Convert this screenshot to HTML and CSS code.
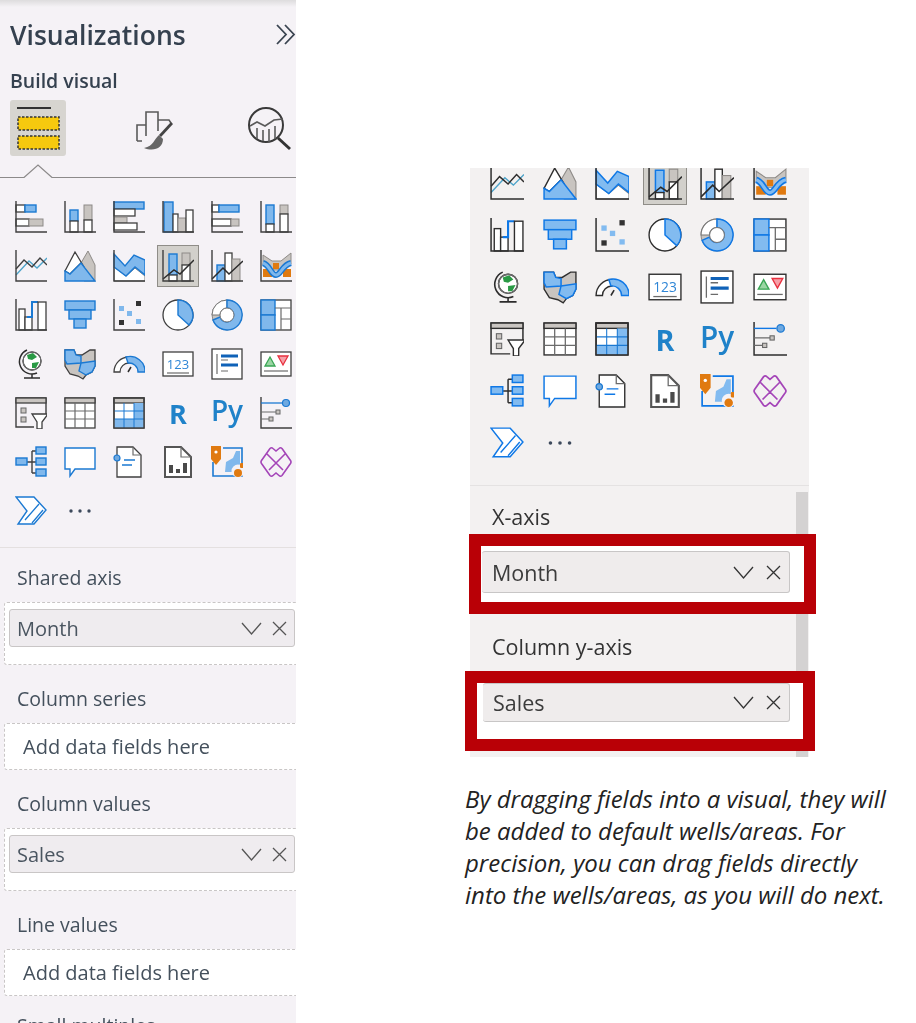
FILE: index.html
```html
<!DOCTYPE html>
<html lang="en">
<head>
<meta charset="UTF-8">
<meta name="viewport" content="width=device-width, initial-scale=1.0">
<title>Visualizations pane</title>
<link rel="stylesheet" href="styles.css">
</head>
<body>

<!-- Shared icon sheet, both panes use it -->
<svg class="sheet" aria-hidden="true">
  <symbol id="i-sbar" viewBox="0 0 32 32"><rect class="w" x="1" y="4" width="9" height="7"/><rect class="b" x="10" y="4" width="11" height="7"/><rect class="w" x="1" y="18" width="13" height="7"/><rect class="g" x="14" y="18" width="14" height="7"/><path class="l" d="M1 0V31H32"/></symbol>
  <symbol id="i-scol" viewBox="0 0 32 32"><rect class="b" x="6" y="9" width="8" height="11"/><rect class="w" x="6" y="20" width="8" height="11"/><rect class="g" x="20" y="4" width="8" height="15"/><rect class="w" x="20" y="19" width="8" height="12"/><path class="l" d="M1 0V31H32"/></symbol>
  <symbol id="i-cbar" viewBox="0 0 32 32"><rect class="b" x="1" y="1" width="30" height="7"/><rect class="w" x="1" y="8" width="21" height="7"/><rect class="g" x="1" y="16" width="13" height="6"/><rect class="w" x="1" y="22" width="23" height="7"/><path class="l" d="M1 0V31H32"/></symbol>
  <symbol id="i-ccol" viewBox="0 0 32 32"><rect class="b" x="2" y="1" width="9" height="30"/><rect class="w" x="11" y="13" width="5" height="18"/><rect class="g" x="16" y="17" width="8" height="14"/><rect class="w" x="24" y="9" width="7" height="22"/><path class="l" d="M1 0V31H32"/></symbol>
  <symbol id="i-pbar" viewBox="0 0 32 32"><rect class="w" x="1" y="4" width="7" height="7"/><rect class="b" x="8" y="4" width="20" height="7"/><rect class="w" x="1" y="18" width="19" height="7"/><rect class="g" x="20" y="18" width="8" height="7"/><path class="l" d="M1 0V31H32"/></symbol>
  <symbol id="i-pcol" viewBox="0 0 32 32"><rect class="b" x="6" y="4" width="8" height="19"/><rect class="w" x="6" y="23" width="8" height="8"/><rect class="g" x="20" y="4" width="8" height="9"/><rect class="w" x="20" y="13" width="8" height="18"/><path class="l" d="M1 0V31H32"/></symbol>

  <symbol id="i-line" viewBox="0 0 32 32"><path class="t" d="M1 25L14 11L22 18L32 8"/><path class="l" d="M1 19L9 10L17 17L25 8L32 15"/><path class="l" d="M1 0V31H32"/></symbol>
  <symbol id="i-area" viewBox="0 0 32 32"><path class="g" d="M17 13L24 1L31 15V31H20Z"/><path class="w" d="M1 21L11 2L20 17L17 13L6 24Z"/><path class="b" d="M1 31V21L6 24L17 13L31 31Z"/></symbol>
  <symbol id="i-sarea" viewBox="0 0 32 32"><path class="wn" d="M1 17L13 26L22 18L32 26V31H1Z"/><path class="b" d="M1 4L12 16L21 5L32 10V25L22 17L13 26L1 17Z"/><path class="l" d="M1 0V31H32"/></symbol>
  <symbol id="i-combo" viewBox="0 0 32 32"><rect class="b" x="7" y="4" width="8" height="21"/><rect class="w" x="7" y="25" width="8" height="6"/><rect class="g" x="20" y="3" width="8" height="12"/><rect class="w" x="20" y="15" width="8" height="16"/><path class="l2" d="M1 29L12 20L18 24L32 10"/><path class="l" d="M1 0V31H32"/></symbol>
  <symbol id="i-combo2" viewBox="0 0 32 32"><rect class="b" x="6" y="15" width="8" height="16"/><rect class="w" x="14" y="3" width="7" height="28"/><rect class="g" x="21" y="9" width="8" height="22"/><path class="l2" d="M1 29L12 18L18 24L32 11"/><path class="l" d="M1 0V31H32"/></symbol>
  <symbol id="i-ribbon" viewBox="0 0 32 32"><path class="g" d="M3 5L12 11H21L31 3V14L21 20H12L3 15Z"/><rect class="or" x="3" y="19" width="9" height="8"/><rect class="or" x="23" y="19" width="8" height="8"/><rect class="or" x="13" y="13" width="6" height="6"/><path class="rib-o" d="M3 13C10 15 11 25 16 25C21 25 22 15 31 13"/><path class="rib-i" d="M3 13C10 15 11 25 16 25C21 25 22 15 31 13"/><path class="l" d="M1 0V31H32"/></symbol>

  <symbol id="i-fall" viewBox="0 0 32 32"><rect class="w" x="4" y="10" width="6" height="21"/><rect class="w" x="10" y="18" width="7" height="13"/><path class="bs2" d="M12 18H17V3H23"/><rect class="w" x="17" y="10" width="0" height="21"/><rect class="w" x="23" y="3" width="8" height="28"/><path class="l" d="M1 0V31H32"/></symbol>
  <symbol id="i-funnel" viewBox="0 0 32 32"><rect class="b" x="1" y="2" width="30" height="9"/><rect class="b" x="5" y="11" width="22" height="9"/><rect class="b" x="10" y="20" width="12" height="9"/></symbol>
  <symbol id="i-scatter" viewBox="0 0 32 32"><path class="l" d="M1 0V31H32"/><rect class="dk" x="23" y="2" width="5" height="5"/><rect class="lb" x="6" y="7" width="5" height="5"/><rect class="lb" x="14" y="12" width="5" height="5"/><rect class="dk" x="6" y="21" width="5" height="5"/><rect class="lb" x="23" y="20" width="5" height="5"/></symbol>
  <symbol id="i-pie" viewBox="0 0 32 32"><circle class="w" cx="16" cy="16" r="15"/><path class="b" d="M16 1A15 15 0 0 1 27 26L16 16Z"/></symbol>
  <symbol id="i-donut" viewBox="0 0 32 32"><circle class="g" cx="16" cy="16" r="15"/><path class="wn" d="M1 16A15 15 0 0 1 16 1V9A7 7 0 0 0 9 16Z"/><path class="b" d="M16 1A15 15 0 1 1 2 21L9 18A7 7 0 1 0 16 9Z"/><circle class="wn" cx="16" cy="16" r="7"/></symbol>
  <symbol id="i-tree" viewBox="0 0 32 32"><rect class="w" x="1" y="1" width="30" height="30"/><rect class="b" x="1" y="1" width="14" height="15"/><rect class="b" x="1" y="16" width="14" height="15"/><path class="n" d="M15 9H31M21 9V31M21 20H31"/></symbol>

  <symbol id="i-globe" viewBox="0 0 32 32"><circle class="w" cx="17" cy="13" r="9"/><path class="gn" d="M12 7L18 5L22 9L17 12L13 11ZM17 15L24 14L21 20L17 20Z"/><path class="l2" d="M12 2A12 12 0 0 0 22 25M17 26V30M9 30H25"/><circle class="n" cx="17" cy="13" r="9"/></symbol>
  <symbol id="i-map" viewBox="0 0 32 32"><path class="gd" d="M1 2L10 2L12 7L18 7L26 2H31V18L28 24L22 27L19 31L14 28L6 26L1 18Z"/><path class="b" d="M1 2H10L12 7L17 8V15L3 16L1 12Z"/><path class="b" d="M17 15L31 13V18L28 24L22 27L15 23Z"/></symbol>
  <symbol id="i-gauge" viewBox="0 0 32 32"><path class="w" d="M1 24A15 15 0 0 1 16 9V15A9 9 0 0 0 7 24Z"/><path class="b" d="M13 9A15 15 0 0 1 32 24H25A9 9 0 0 0 15 15Z"/><path class="l2" d="M15 24L18 19"/></symbol>
  <symbol id="i-card" viewBox="0 0 32 32"><rect class="w" x="1" y="4" width="30" height="24"/><text class="num" x="16" y="21" text-anchor="middle">123</text><path class="n" d="M5 25H27"/></symbol>
  <symbol id="i-multi" viewBox="0 0 32 32"><rect class="w" x="1" y="1" width="30" height="30"/><path class="n" d="M6 6V26M10 12H17M10 23H17"/><path class="bt" d="M10 8H27M10 17H27"/></symbol>
  <symbol id="i-kpi" viewBox="0 0 32 32"><rect class="w" x="1" y="4" width="30" height="24"/><path class="gt" d="M5 18L10 9L15 18Z"/><path class="rt" d="M18 8H28L23 17Z"/><path class="n" d="M4 23H28"/></symbol>

  <symbol id="i-slicer" viewBox="0 0 32 32"><path class="l" d="M19 30H1V1H31V17"/><rect class="gl" x="1" y="1" width="30" height="5"/><rect class="sq" x="6" y="11" width="5" height="5"/><rect class="sq" x="6" y="20" width="5" height="5"/><path class="w" d="M17 17H33L27 25V32H22V25Z"/></symbol>
  <symbol id="i-table" viewBox="0 0 32 32"><rect class="w" x="1" y="1" width="30" height="30"/><rect class="gl" x="1" y="1" width="30" height="5"/><path class="n" d="M11 6V31M21 6V31M1 14H31M1 22H31"/></symbol>
  <symbol id="i-matrix" viewBox="0 0 32 32"><rect class="w" x="1" y="1" width="30" height="30"/><rect class="gl" x="1" y="1" width="30" height="5"/><rect class="lb" x="21" y="6" width="10" height="25"/><rect class="lb" x="1" y="22" width="30" height="9"/><path class="cell" d="M11 6V31M21 6V31M1 14H31M1 22H31"/><rect class="l" x="1" y="1" width="30" height="30"/></symbol>
  <symbol id="i-r" viewBox="0 0 32 32"><text class="rtext" x="16" y="27" text-anchor="middle">R</text></symbol>
  <symbol id="i-py" viewBox="0 0 32 32"><text class="rtext py" x="16" y="24" text-anchor="middle">Py</text></symbol>
  <symbol id="i-infl" viewBox="0 0 32 32"><path class="l" d="M1 0V31H32"/><path class="bs" d="M1 6H22"/><circle class="bk" cx="26" cy="6" r="3.500"/><path class="n" d="M1 15H16M1 22H9"/><rect class="sq" x="16" y="13" width="4" height="4"/><rect class="sq" x="9" y="20" width="4" height="4"/></symbol>

  <symbol id="i-decomp" viewBox="0 0 32 32"><path class="l" d="M12 16H21M17 5V27M17 5H21M17 27H21"/><rect class="b" x="1" y="12" width="11" height="7"/><rect class="b" x="21" y="1" width="10" height="7"/><rect class="b" x="21" y="12" width="10" height="7"/><rect class="b" x="21" y="23" width="10" height="7"/></symbol>
  <symbol id="i-bubble" viewBox="0 0 32 32"><path class="wb" d="M1 2H31V23H11L6 30V23H1Z"/></symbol>
  <symbol id="i-para" viewBox="0 0 32 32"><path class="w" d="M4 1H20L28 9V31H4Z"/><path class="n" d="M20 1V9H28"/><circle class="bk" cx="4" cy="12" r="3"/><path class="bs" d="M11 14H22M9 19H19"/></symbol>
  <symbol id="i-report" viewBox="0 0 32 32"><path class="wt" d="M3 1H19L29 11V31H3Z"/><path class="n" d="M19 1V11H29"/><path class="bars" d="M7 19h4v8H7zM14 23h4v4h-4zM21 17h4v10h-4z"/></symbol>
  <symbol id="i-apps" viewBox="0 0 32 32"><path class="bt2" d="M12 2H31V30H2V16"/><path class="lb" d="M14 26L15 16L22 12L25 5L29 5V18L25 26Z"/><circle class="halo" cx="27" cy="25" r="6.500"/><path class="oran" d="M0 0H10V13L5 19L0 13Z"/><circle class="spot" cx="5" cy="6" r="1.600"/><rect class="oran" x="29" y="17" width="5" height="5" rx="1"/><circle class="oran" cx="27" cy="27" r="4"/></symbol>
  <symbol id="i-diamond" viewBox="0 0 32 32"><path class="pur" d="M10 2.500Q11.500 1 13 2.500L16 5L19 2.500Q20.500 1 22 2.500L30.500 14.500Q31.500 16 30.500 17.500L22 29.500Q20.500 31 19 29.500L16 27L13 29.500Q11.500 31 10 29.500L1.500 17.500Q.5 16 1.500 14.500ZM7 8L23 24M25 8L9 24"/></symbol>
  <symbol id="i-flow" viewBox="0 0 32 32"><path class="wb" d="M1 2H19L31 15L19 29H3L12 16Z"/><path class="bs" d="M10 25L24 9M17 28L28 15"/></symbol>
  <symbol id="i-more" viewBox="0 0 32 32"><circle class="dot" cx="7" cy="16" r="1.700"/><circle class="dot" cx="16" cy="16" r="1.700"/><circle class="dot" cx="25" cy="16" r="1.700"/></symbol>

  <symbol id="i-chev" viewBox="0 0 21 13"><path d="M1 1L10.500 12L20 1"/></symbol>
  <symbol id="i-x" viewBox="0 0 15 15"><path d="M1 1L14 14M14 1L1 14"/></symbol>
</svg>

<main class="page">

  <!-- Left: the whole pane -->
  <aside class="pane">
    <div class="pane-head">
      <h1>Visualizations</h1>
      <svg class="collapse" viewBox="0 0 21 21"><path d="M2 1L11 10.500L2 20M10 1L19 10.500L10 20"/></svg>
    </div>
    <h2>Build visual</h2>
    <div class="tabs">
      <div class="tab tab-active">
        <svg viewBox="0 0 56 56"><path class="f-rule" d="M7 8H41"/><rect class="f-well" x="8" y="17" width="41" height="13"/><rect class="f-well" x="8" y="36" width="41" height="13"/></svg>
      </div>
      <div class="tab tab-format">
        <svg viewBox="0 0 42 42"><path class="f-line" d="M3 32V16H12V3H24V11H35L37 14M3 32H8M12 16V27M24 11V22"/><path class="f-brush" d="M38 14L26 27"/><path class="f-blob" d="M25 26C20 30 20 37 10 39C20 43 29 39 29 30Z"/></svg>
      </div>
      <div class="tab tab-analytics">
        <svg viewBox="0 0 44 44"><circle class="f-ring" cx="18" cy="18" r="17"/><path class="f-line" d="M2 19L9 15L17 19L26 13L35 12M9 21V32M15 23V34M21 22V35M27 19V32"/><path class="f-glass" d="M30 31L42 42"/></svg>
      </div>
    </div>
    <svg class="notch" viewBox="0 0 296 14" preserveAspectRatio="none"><path d="M0 13.500H24L38 1L52 13.500H296"/></svg>

    <div class="icons">
      <svg class="ico"><use href="#i-sbar"/></svg>
      <svg class="ico"><use href="#i-scol"/></svg>
      <svg class="ico"><use href="#i-cbar"/></svg>
      <svg class="ico"><use href="#i-ccol"/></svg>
      <svg class="ico"><use href="#i-pbar"/></svg>
      <svg class="ico"><use href="#i-pcol"/></svg>
      <svg class="ico"><use href="#i-line"/></svg>
      <svg class="ico"><use href="#i-area"/></svg>
      <svg class="ico"><use href="#i-sarea"/></svg>
      <span class="ico-on"><svg class="ico"><use href="#i-combo"/></svg></span>
      <svg class="ico"><use href="#i-combo2"/></svg>
      <svg class="ico"><use href="#i-ribbon"/></svg>
      <svg class="ico"><use href="#i-fall"/></svg>
      <svg class="ico"><use href="#i-funnel"/></svg>
      <svg class="ico"><use href="#i-scatter"/></svg>
      <svg class="ico"><use href="#i-pie"/></svg>
      <svg class="ico"><use href="#i-donut"/></svg>
      <svg class="ico"><use href="#i-tree"/></svg>
      <svg class="ico"><use href="#i-globe"/></svg>
      <svg class="ico"><use href="#i-map"/></svg>
      <svg class="ico"><use href="#i-gauge"/></svg>
      <svg class="ico"><use href="#i-card"/></svg>
      <svg class="ico"><use href="#i-multi"/></svg>
      <svg class="ico"><use href="#i-kpi"/></svg>
      <svg class="ico"><use href="#i-slicer"/></svg>
      <svg class="ico"><use href="#i-table"/></svg>
      <svg class="ico"><use href="#i-matrix"/></svg>
      <svg class="ico"><use href="#i-r"/></svg>
      <svg class="ico"><use href="#i-py"/></svg>
      <svg class="ico"><use href="#i-infl"/></svg>
      <svg class="ico"><use href="#i-decomp"/></svg>
      <svg class="ico"><use href="#i-bubble"/></svg>
      <svg class="ico"><use href="#i-para"/></svg>
      <svg class="ico"><use href="#i-report"/></svg>
      <svg class="ico"><use href="#i-apps"/></svg>
      <svg class="ico"><use href="#i-diamond"/></svg>
      <svg class="ico"><use href="#i-flow"/></svg>
      <svg class="ico"><use href="#i-more"/></svg>
    </div>

    <div class="fields">
      <label>Shared axis</label>
      <div class="well">
        <div class="pill"><span>Month</span><svg class="chev"><use href="#i-chev"/></svg><svg class="cross"><use href="#i-x"/></svg></div>
      </div>
      <label>Column series</label>
      <div class="well well-empty">Add data fields here</div>
      <label>Column values</label>
      <div class="well">
        <div class="pill"><span>Sales</span><svg class="chev"><use href="#i-chev"/></svg><svg class="cross"><use href="#i-x"/></svg></div>
      </div>
      <label>Line values</label>
      <div class="well well-empty well-last">Add data fields here</div>
      <label>Small multiples</label>
    </div>
  </aside>

  <!-- Right: cropped pane with the callouts, and the note -->
  <section class="side">
    <div class="crop">
      <div class="crop-icons">
        <div class="icons icons-big">
          <svg class="ico"><use href="#i-line"/></svg>
          <svg class="ico"><use href="#i-area"/></svg>
          <svg class="ico"><use href="#i-sarea"/></svg>
          <span class="ico-on"><svg class="ico"><use href="#i-combo"/></svg></span>
          <svg class="ico"><use href="#i-combo2"/></svg>
          <svg class="ico"><use href="#i-ribbon"/></svg>
          <svg class="ico"><use href="#i-fall"/></svg>
          <svg class="ico"><use href="#i-funnel"/></svg>
          <svg class="ico"><use href="#i-scatter"/></svg>
          <svg class="ico"><use href="#i-pie"/></svg>
          <svg class="ico"><use href="#i-donut"/></svg>
          <svg class="ico"><use href="#i-tree"/></svg>
          <svg class="ico"><use href="#i-globe"/></svg>
          <svg class="ico"><use href="#i-map"/></svg>
          <svg class="ico"><use href="#i-gauge"/></svg>
          <svg class="ico"><use href="#i-card"/></svg>
          <svg class="ico"><use href="#i-multi"/></svg>
          <svg class="ico"><use href="#i-kpi"/></svg>
          <svg class="ico"><use href="#i-slicer"/></svg>
          <svg class="ico"><use href="#i-table"/></svg>
          <svg class="ico"><use href="#i-matrix"/></svg>
          <svg class="ico"><use href="#i-r"/></svg>
          <svg class="ico"><use href="#i-py"/></svg>
          <svg class="ico"><use href="#i-infl"/></svg>
          <svg class="ico"><use href="#i-decomp"/></svg>
          <svg class="ico"><use href="#i-bubble"/></svg>
          <svg class="ico"><use href="#i-para"/></svg>
          <svg class="ico"><use href="#i-report"/></svg>
          <svg class="ico"><use href="#i-apps"/></svg>
          <svg class="ico"><use href="#i-diamond"/></svg>
          <svg class="ico"><use href="#i-flow"/></svg>
          <svg class="ico"><use href="#i-more"/></svg>
        </div>
      </div>
      <div class="crop-fields">
        <div class="thumb"></div>
        <label>X-axis</label>
        <div class="callout callout-x">
          <div class="pill"><span>Month</span><svg class="chev"><use href="#i-chev"/></svg><svg class="cross"><use href="#i-x"/></svg></div>
        </div>
        <label>Column y-axis</label>
        <div class="callout callout-y">
          <div class="pill"><span>Sales</span><svg class="chev"><use href="#i-chev"/></svg><svg class="cross"><use href="#i-x"/></svg></div>
        </div>
      </div>
    </div>
    <p class="note">By dragging fields into a visual, they will be added to default wells/areas. For precision, you can drag fields directly into the wells/areas, as you will do next.</p>
  </section>

</main>
</body>
</html>
```

FILE: styles.css
```css
* { box-sizing: border-box; }
html, body { margin: 0; height: 100%; background: #fff; overflow: hidden; }
body { font-family: "Open Sans", "Noto Sans", sans-serif; color: #404040; }

.sheet { display: none; }

.page { display: flex; height: 1023px; overflow: hidden; }

/* Left pane */
.pane {
  width: 296px;
  height: 1023px;
  flex: none;
  overflow: hidden;
  background: linear-gradient(#dddcdd 0, #f5f2f6 7px);
  --ink: #3f3f3f;
  --blue: #1b79d2;
  --light: #80b8ec;
  filter: blur(0.4px);
}
.pane-head { display: flex; justify-content: space-between; align-items: center; padding: 17px 0 0 10px; height: 52px; }
h1 { margin: 0; font-size: 26.500px; font-weight: 600; line-height: 34px; color: #35414f; }
.collapse { width: 21px; height: 21px; fill: none; stroke: #3a4450; stroke-width: 1.800; }
h2 { margin: 16px 0 0 10px; font-size: 19.500px; font-weight: 600; line-height: 26px; color: #35414f; }

.tabs { display: flex; height: 56px; margin: 6px 0 0 10px; }
.tab { width: 56px; height: 56px; flex: none; }
.tab svg { display: block; }
.tab-active { background: #d7d5d0; border-radius: 3px; }
.tab-format { margin-left: 68px; padding: 9px 0 0 0; }
.tab-format svg { width: 42px; height: 42px; }
.tab-analytics { margin-left: 56px; padding: 7px 0 0 2px; }
.tab-analytics svg { width: 44px; height: 44px; }
.f-rule { stroke: #333; stroke-width: 2; fill: none; }
.f-well { fill: #f6c90e; stroke: #333; stroke-width: 1.500; stroke-dasharray: 2.500 1.500; }
.f-line { fill: none; stroke: #5a5a5a; stroke-width: 1.600; }
.f-ring { fill: none; stroke: #3a3a3a; stroke-width: 2; }
.f-brush { fill: none; stroke: #444; stroke-width: 2.800; }
.f-blob { fill: #666; }
.f-glass { fill: none; stroke: #333; stroke-width: 3; }

.notch { display: block; width: 296px; height: 14px; margin-top: 8px; fill: none; stroke: #8c8a8a; stroke-width: 1.200; }

/* Icon grid */
.icons { display: grid; grid-template-columns: repeat(6, 32px); grid-auto-rows: 32px; gap: 17px; padding: 23px 0 0 15px; }
.ico { display: block; width: 32px; height: 32px; overflow: visible; }
.ico-on { display: block; background: #d2d0cb; outline: 1px solid #8f8d88; box-shadow: 0 0 0 4px #d2d0cb; outline-offset: 4px; }

.icons-big { grid-template-columns: repeat(6, 34px); grid-auto-rows: 34px; column-gap: 18.500px; row-gap: 18px; padding: 0 0 0 20px; margin-top: -2px; }
.icons-big .ico { width: 34px; height: 34px; }

/* Icon parts, colours come from the pane */
.l, .n, .l2, .t, .bs, .bs2, .bt, .bt2, .cell, .rib-o, .rib-i { fill: none; }
.l { stroke: var(--ink); stroke-width: 1.400; }
.l2 { stroke: #2c2c2c; stroke-width: 1.500; }
.n { stroke: #6b6b6b; stroke-width: 1.200; }
.t { stroke: #4da3c9; stroke-width: 1.300; }
.w { fill: #fff; stroke: var(--ink); stroke-width: 1.300; }
.wn { fill: #fff; stroke: #777; stroke-width: 1; }
.wt { fill: #fff; stroke: #555; stroke-width: 2; }
.b { fill: var(--light); stroke: var(--blue); stroke-width: 1.400; }
.wb { fill: #fff; stroke: var(--blue); stroke-width: 1.400; }
.bs { stroke: var(--blue); stroke-width: 1.300; }
.bs2 { stroke: var(--blue); stroke-width: 2; }
.bt { stroke: #0f62b8; stroke-width: 3; }
.bt2 { stroke: var(--blue); stroke-width: 1.600; }
.bk { fill: #6fa9e0; stroke: #1b79d2; stroke-width: 1.200; }
.g { fill: #c8c4c0; stroke: #8d8a87; stroke-width: 1; }
.gd { fill: #c8c4c0; stroke: var(--ink); stroke-width: 1.300; }
.gl { fill: #c9c5c1; stroke: var(--ink); stroke-width: 1.300; }
.sq { fill: #c9c5c1; stroke: #666; stroke-width: 1; }
.dk { fill: #333; }
.lb { fill: var(--light); }
.or, .oran { fill: #e07a10; }
.rib-o { stroke: var(--blue); stroke-width: 6; }
.rib-i { stroke: var(--light); stroke-width: 3; }
.spot { fill: #fff; }
.halo { fill: #f5f2f6; }
.gn { fill: #2a9a45; }
.gt { fill: #9bd6a4; stroke: #3aa655; stroke-width: 1.300; }
.rt { fill: #f6a0a8; stroke: #e8303f; stroke-width: 1.300; }
.cell { stroke: #1b79d2; stroke-width: 1; }
.bars { fill: #4a4a4a; }
.pur { fill: none; stroke: #a445b8; stroke-width: 1.600; }
.dot { fill: #3d4a5c; }
.num { font-family: "Open Sans", sans-serif; font-size: 13px; fill: #2f86d6; }
.rtext { font-family: "Open Sans", sans-serif; font-size: 27px; font-weight: 700; fill: #1f82c9; }
.py { font-size: 28px; font-weight: 600; }

/* Fields */
.fields { margin-top: 20px; border-top: 1px solid #e4e0e0; padding-top: 18px; }
label { display: block; font-size: 19.500px; line-height: 24px; color: #44505c; }
.fields label { margin-left: 17px; }
.well {
  margin: 12px -4px 22px 4px;
  padding: 6px 0 0 4px;
  height: 63px;
  background: #fff;
  border: 1.500px dashed #c9c6c6;
  border-radius: 3px;
}
.well-empty { height: 47px; padding: 0 0 0 18px; font-size: 20px; line-height: 46px; color: #44505c; }
.well-last { margin-bottom: 18px; }

.pill {
  display: flex;
  align-items: center;
  height: 38px;
  padding: 0 7px 0 7px;
  font-size: 20px;
  background: #efecef;
  border: 1.500px solid #c9c6c6;
  border-radius: 3px;
  color: #4a5560;
}
.pane .pill { width: 286px; }
.pill span { flex: 1; }
.chev { width: 21px; height: 13px; margin-right: 10px; fill: none; stroke: #555; stroke-width: 1.300; }
.cross { width: 15px; height: 15px; fill: none; stroke: #555; stroke-width: 1.300; }

/* Right column */
.side { width: 440px; flex: none; margin-left: 169px; padding-top: 168px; }
.crop { width: 339px; margin-left: 5px; background: #f3f1f1; --ink: #2e2e2e; --blue: #0f78e6; --light: #82bbf0; filter: blur(0.3px); }
.crop-icons { height: 317px; overflow: hidden; padding-top: 0; }
.crop-fields { position: relative; margin-top: 0; height: 272px; border-top: 1px solid #e4e2e2; padding-top: 19px; }
.crop-fields label { margin-left: 22px; font-size: 21.500px; color: #333; }
.thumb { position: absolute; left: 326px; top: 6px; bottom: 0; width: 12px; background: #d4d2d2; }

/* The red frames stick out past the cropped pane */
.callout { position: relative; height: 56px; background: #fff; outline: 12px solid #b90006; }
.callout-x { margin: 17px 5px 33px 11px; padding: 5px 14px 0 1px; }
.callout-y { margin: 24px 6px 0 7px; padding: 0 13px 0 6px; }
.crop .pill { background: #efecec; border: 0; border-top: 1px solid #c8c6c6; border-bottom: 1.500px solid #c8c6c6; border-right: 1px solid #c8c6c6; color: #3c3c3c; height: 42px; padding: 0 8px 0 10px; font-size: 21.500px; }
.crop .chev { margin-right: 12px; }
.callout-y .pill { height: 39px; }
.crop .cross, .crop .chev { stroke: #333; }

.note { width: 430px; margin: 26px 0 0; font-size: 24px; font-style: italic; line-height: 32px; color: #222; }
```
